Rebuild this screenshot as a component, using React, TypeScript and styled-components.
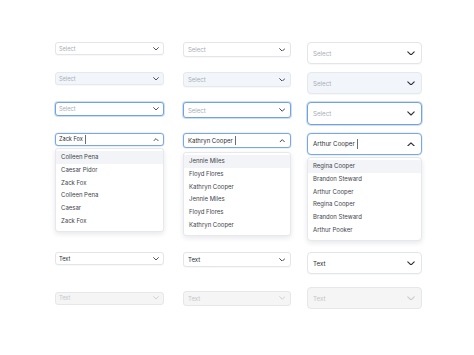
import styled, { createGlobalStyle, css } from "styled-components";

const GlobalStyle = createGlobalStyle`
  body {
    margin: 0;
    background: #ffffff;
    font-family: Inter, "Noto Sans", sans-serif;
  }
`;

type Size = "sm" | "md" | "lg";
type Variant = "default" | "filled" | "focused" | "open" | "disabled";

const sizes = {
  sm: { height: 13, font: 5.6, pad: 4, chevron: 6, radius: 3 },
  md: { height: 15, font: 6, pad: 5, chevron: 6.5, radius: 3 },
  lg: { height: 22, font: 6.2, pad: 6, chevron: 8, radius: 4 },
};

const Page = styled.div`
  display: grid;
  grid-template-columns: 109px 108px 112px;
  grid-template-rows: 30px 30px 31px 119px 34px 24px;
  column-gap: 19px;
  padding: 42px 0 0 55px;
  width: 474px;
  height: 355px;
  box-sizing: border-box;

  & > :nth-child(3n) {
    margin-left: -3px;
  }
`;

const Cell = styled.div<{ $center?: boolean }>`
  position: relative;
  display: flex;
  flex-direction: column;
  justify-content: ${(p) => (p.$center ? "center" : "flex-start")};
`;

const Field = styled.div<{ $size: Size; $variant: Variant }>`
  display: flex;
  align-items: center;
  justify-content: space-between;
  box-sizing: border-box;
  height: ${(p) => sizes[p.$size].height}px;
  padding: 0 ${(p) => sizes[p.$size].pad}px 0 ${(p) => sizes[p.$size].pad - 1}px;
  border-radius: ${(p) => sizes[p.$size].radius}px;
  border: 1px solid #e2e5ea;
  background: #ffffff;
  font-size: ${(p) => sizes[p.$size].font}px;
  color: #2c2f35;
  box-shadow: 0 1px 1px rgba(20, 30, 50, 0.03);

  ${(p) =>
    p.$variant === "filled" &&
    css`
      background: #f2f6fb;
      border-color: #e4e9f0;
    `}
  ${(p) =>
    p.$variant === "focused" &&
    css`
      height: ${sizes[p.$size].height + 1}px;
      border: 1px solid #73a3dc;
      box-shadow: 0 0 0 1px rgba(115, 163, 220, 0.35);
    `}
  ${(p) =>
    p.$variant === "open" &&
    css`
      border: 1px solid #7aa8df;
      box-shadow: 0 0 0 0.5px rgba(115, 163, 220, 0.3);
    `}
  ${(p) =>
    p.$variant === "disabled" &&
    css`
      background: #f5f5f6;
      border-color: #e6e7e9;
      color: #c3c5c9;
      box-shadow: none;
    `}
`;

const Placeholder = styled.span`
  color: #a8adb5;
`;

const Caret = styled.span`
  display: inline-block;
  width: 0;
  height: 1.5em;
  margin-left: 2px;
  border-left: 0.6px solid #6b6e74;
  vertical-align: middle;
`;

const Value = styled.span`
  display: flex;
  align-items: center;
  white-space: nowrap;
`;

const Menu = styled.ul<{ $size: Size; $top: number }>`
  position: absolute;
  left: 0;
  right: 0;
  top: ${(p) => p.$top}px;
  margin: 0;
  padding: 2px 0 3px;
  list-style: none;
  background: #ffffff;
  border: 1px solid #e6e8ec;
  border-radius: ${(p) => sizes[p.$size].radius}px;
  box-shadow: 0 2px 5px rgba(20, 30, 50, 0.1);
`;

const Option = styled.li<{ $active?: boolean }>`
  height: 12.8px;
  line-height: 12.8px;
  padding-left: 5px;
  font-size: 6px;
  color: #41444a;
  background: ${(p) => (p.$active ? "#f2f4f7" : "transparent")};
`;

const Chevron = ({ up, size, color }: { up?: boolean; size: number; color: string }) => (
  <svg width={size} height={size * 0.6} viewBox="0 0 10 6" fill="none">
    <polyline
      points={up ? "1,5 5,1 9,5" : "1,1 5,5 9,1"}
      stroke={color}
      strokeWidth={1.4}
      strokeLinecap="round"
      strokeLinejoin="round"
    />
  </svg>
);

type SelectProps = {
  size: Size;
  variant: Variant;
  value?: string;
  placeholder?: string;
  typing?: boolean;
  options?: string[];
};

const Select = ({ size, variant, value, placeholder, typing, options }: SelectProps) => {
  const s = sizes[size];
  return (
    <>
      <Field $size={size} $variant={variant}>
        <Value>
          {value ? value : <Placeholder>{placeholder}</Placeholder>}
          {typing && <Caret />}
        </Value>
        <Chevron
          up={variant === "open"}
          size={s.chevron}
          color={variant === "disabled" ? "#c9cbcf" : "#2f3238"}
        />
      </Field>
      {options && (
        <Menu $size={size} $top={s.height + (size === "md" ? 4 : 2)}>
          {options.map((o, i) => (
            <Option key={i} $active={i === 0}>
              {o}
            </Option>
          ))}
        </Menu>
      )}
    </>
  );
};

const columns: { size: Size; typed: string; options: string[] }[] = [
  {
    size: "sm",
    typed: "Zack Fox",
    options: ["Colleen Pena", "Caesar Pidor", "Zack Fox", "Colleen Pena", "Caesar", "Zack Fox"],
  },
  {
    size: "md",
    typed: "Kathryn Cooper",
    options: ["Jennie Miles", "Floyd Flores", "Kathryn Cooper", "Jennie Miles", "Floyd Flores", "Kathryn Cooper"],
  },
  {
    size: "lg",
    typed: "Arthur Cooper",
    options: ["Regina Cooper", "Brandon Steward", "Arthur Cooper", "Regina Cooper", "Brandon Steward", "Arthur Pooker"],
  },
];

export default function App() {
  return (
    <>
      <GlobalStyle />
      <Page>
        {columns.map((c) => (
          <Cell key={"d" + c.size}>
            <Select size={c.size} variant="default" placeholder="Select" />
          </Cell>
        ))}
        {columns.map((c) => (
          <Cell key={"f" + c.size}>
            <Select size={c.size} variant="filled" placeholder="Select" />
          </Cell>
        ))}
        {columns.map((c) => (
          <Cell key={"x" + c.size}>
            <Select size={c.size} variant="focused" placeholder="Select" />
          </Cell>
        ))}
        {columns.map((c) => (
          <Cell key={"o" + c.size}>
            <Select size={c.size} variant="open" value={c.typed} typing options={c.options} />
          </Cell>
        ))}
        {columns.map((c) => (
          <Cell key={"t" + c.size}>
            <Select size={c.size} variant="default" value="Text" />
          </Cell>
        ))}
        {columns.map((c) => (
          <Cell key={"z" + c.size} $center>
            <Select size={c.size} variant="disabled" value="Text" />
          </Cell>
        ))}
      </Page>
    </>
  );
}
